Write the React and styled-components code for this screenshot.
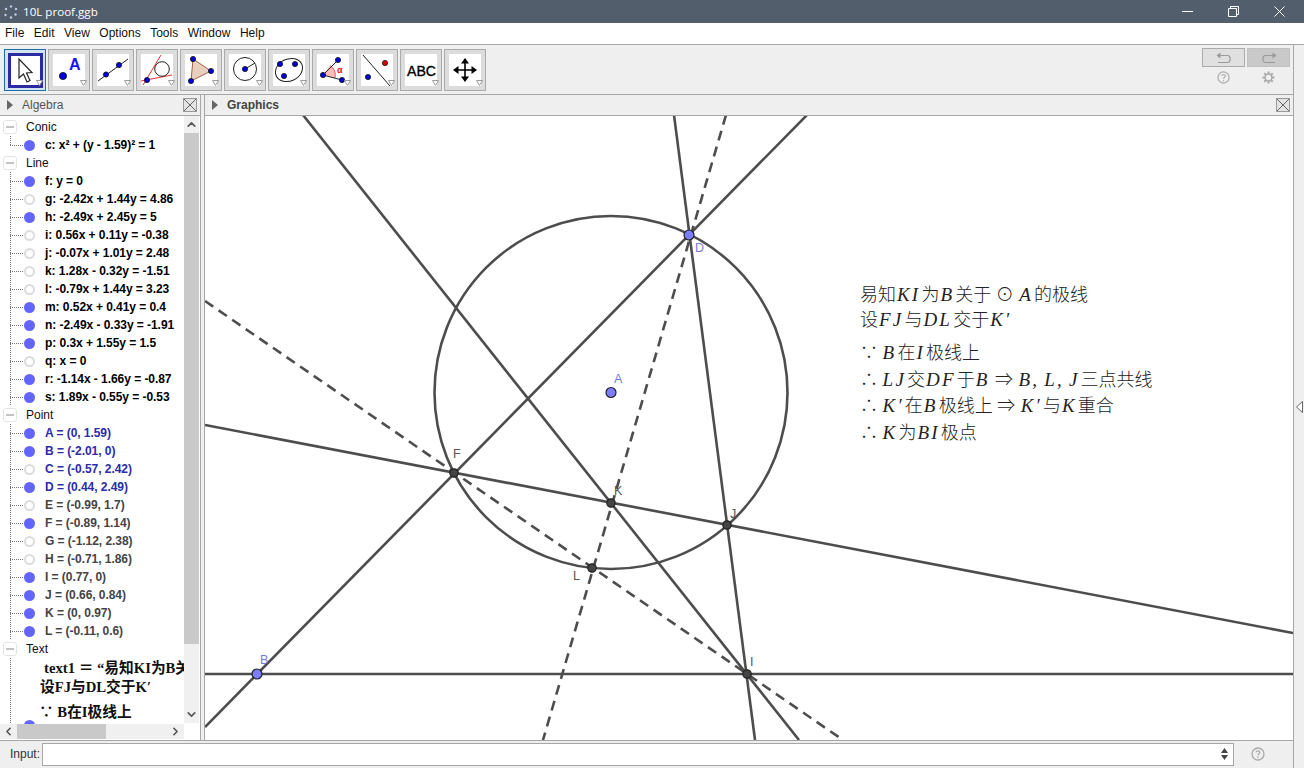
import React from 'react';
import styled, { createGlobalStyle } from 'styled-components';
import { ChevronUp, ChevronDown, ChevronLeft, ChevronRight } from 'lucide-react';

const GlobalStyle = createGlobalStyle`
  html, body {
    margin: 0;
    padding: 0;
    background: #fff;
    overflow: hidden;
  }
  * {
    box-sizing: border-box;
  }
`;

const Window = styled.div`
  width: 1304px;
  height: 768px;
  display: flex;
  flex-direction: column;
  overflow: hidden;
  font-family: 'Liberation Sans', Arial, sans-serif;
  font-size: 12px;
  color: #000;
`;

/* title bar */
const TitleBar = styled.div`
  height: 23px;
  flex: none;
  background: #535e6c;
  color: #fff;
  display: flex;
  align-items: center;
  padding-left: 3px;
`;
const TitleText = styled.span`
  margin-left: 4px;
  font-family: 'Open Sans', sans-serif;
  font-size: 11.6px;
  flex: 1;
`;
const WinButton = styled.span`
  width: 46px;
  height: 23px;
  display: flex;
  align-items: center;
  justify-content: center;
`;
const WinButtons = styled.div`
  display: flex;
  margin-right: 2px;
`;

/* menu */
const MenuBar = styled.div`
  height: 22px;
  flex: none;
  display: flex;
  align-items: center;
  gap: 9.5px;
  padding: 0 0 1px 5px;
  background: #fff;
  border-bottom: 1px solid #a6a6a6;
  font-size: 12px;
`;
const MenuItem = styled.span`
  color: #111;
`;

const Workspace = styled.div`
  flex: 1;
  min-height: 0;
  display: flex;
`;
const Main = styled.div`
  width: 1294px;
  flex: none;
  display: flex;
  flex-direction: column;
  border-right: 1px solid #a6a6a6;
`;
const SideStrip = styled.div`
  flex: 1;
  background: #efefef;
  display: flex;
  align-items: center;
  justify-content: center;
`;

/* toolbar */
const Toolbar = styled.div`
  height: 50px;
  flex: none;
  background: #efefef;
  border-bottom: 1px solid #a6a6a6;
  display: flex;
  align-items: flex-start;
  justify-content: space-between;
  padding: 4px 3px 0 4px;
`;
const ToolGroup = styled.div`
  display: flex;
  gap: 2px;
`;
const ToolButton = styled.div`
  position: relative;
  width: 42px;
  height: 42px;
  display: flex;
  align-items: center;
  justify-content: center;
  background: ${p => (p.$active ? '#d4e4ee' : '#dcdcdc')};
  border: 1px solid ${p => (p.$active ? '#1c6ea4' : '#ababab')};
`;
const ToolFace = styled.div`
  width: 32px;
  height: 32px;
  background: #fff;
  display: flex;
  svg {
    display: block;
  }
`;
const ActiveFace = styled.div`
  width: 35px;
  height: 35px;
  background: #fff;
  border: 3px solid #2a2aa3;
  display: flex;
  align-items: center;
  justify-content: center;
`;
const DropMark = styled.svg`
  position: absolute;
  right: 2px;
  bottom: 4px;
  width: 7px;
  height: 6px;
`;
const HistoryGroup = styled.div`
  display: grid;
  grid-template-columns: 43px 43px;
  column-gap: 2px;
  row-gap: 4px;
  justify-items: center;
  align-items: center;
  margin-top: -1px;
`;
const HistoryButton = styled.div`
  width: 43px;
  height: 19px;
  display: flex;
  align-items: center;
  justify-content: center;
  background: ${p => (p.$dim ? '#c9c9c9' : '#e0e0e0')};
  border: 1px solid ${p => (p.$dim ? '#c0c0c0' : '#ababab')};
`;

/* dock panels */
const Panels = styled.div`
  flex: 1;
  min-height: 0;
  display: flex;
  background: #efefef;
`;
const AlgebraPanel = styled.div`
  width: 201px;
  flex: none;
  display: flex;
  flex-direction: column;
  border-right: 1px solid #a6a6a6;
`;
const GraphicsPanel = styled.div`
  flex: 1;
  margin-left: 3px;
  display: flex;
  flex-direction: column;
  min-width: 0;
  border-left: 1px solid #a6a6a6;
`;
const PanelHeader = styled.div`
  height: 21px;
  flex: none;
  display: flex;
  align-items: center;
  background: #efefef;
  border-bottom: 1px solid #a6a6a6;
  padding: 0 2px 0 ${p => p.$inset}px;
`;
const PanelTitle = styled.span`
  flex: 1;
  margin-left: ${p => p.$gap}px;
  color: ${p => (p.$strong ? '#444' : '#555')};
  font-weight: ${p => (p.$strong ? 700 : 400)};
  font-size: 12px;
`;
const CloseBox = styled.span`
  width: 14px;
  height: 14px;
  margin-right: ${p => p.$right || 0}px;
  display: flex;
  background: #e4e4e4;
  border: 1px solid #9a9a9a;
  svg {
    display: block;
  }
`;

/* algebra tree */
const TreeArea = styled.div`
  flex: 1;
  min-height: 0;
  display: grid;
  grid-template-columns: 184px 16px;
  grid-template-rows: 1fr 16px;
  background: #fff;
`;
const TreeList = styled.div`
  overflow: hidden;
  padding-top: 2px;
`;
const GroupRow = styled.div`
  height: 18px;
  display: flex;
  align-items: center;
  padding-left: 3px;
  font-size: 12px;
  color: #111;
`;
const Toggle = styled.span`
  width: 14px;
  height: 14px;
  margin-right: 9px;
  border: 1px solid #e4e4e4;
  border-radius: 3px;
  display: flex;
  align-items: center;
  justify-content: center;
  &::after {
    content: '';
    width: 8px;
    height: 2px;
    background: #c4c4c4;
  }
`;
const ItemRow = styled.div`
  height: 18px;
  display: flex;
  align-items: center;
  padding-left: 10px;
  font-size: 12px;
  font-weight: 700;
  letter-spacing: -0.05px;
  white-space: nowrap;
  color: ${p => p.$color};
`;
const Connector = styled.span`
  width: 14px;
  height: 18px;
  flex: none;
  background-image:
    repeating-linear-gradient(to bottom, #777 0 1px, transparent 1px 2px),
    repeating-linear-gradient(to right, #777 0 1px, transparent 1px 2px);
  background-repeat: no-repeat;
  background-size: 1px ${p => (p.$last ? 9 : 18)}px, 14px 1px;
  background-position: 0 0, 0 9px;
`;
const Bullet = styled.span`
  width: 11px;
  height: 11px;
  flex: none;
  margin-right: 10px;
  border-radius: 50%;
  background: ${p => (p.$on ? '#6464ff' : '#fff')};
  border: ${p => (p.$on ? 'none' : '2px solid #dcdcdc')};
`;
const TextBlock = styled.div`
  position: relative;
  height: 70px;
  padding-left: 10px;
  display: flex;
  background-image: repeating-linear-gradient(to bottom, #777 0 1px, transparent 1px 2px);
  background-repeat: no-repeat;
  background-size: 1px 100%;
  background-position: 10px 0;
`;
const TextLines = styled.div`
  margin-left: 33px;
  font-family: 'Liberation Serif', 'Noto Sans CJK SC', serif;
  font-weight: 700;
  font-size: 14.7px;
  white-space: nowrap;
  color: #111;
`;
const TextLine = styled.div`
  height: ${p => p.$h}px;
  line-height: ${p => p.$h}px;
  margin-left: ${p => p.$indent || 0}px;
`;
const MiniBullet = styled(Bullet)`
  position: absolute;
  left: 24px;
  bottom: -3px;
`;
const VScroll = styled.div`
  background: #f0f0f0;
  display: flex;
  flex-direction: column;
  align-items: stretch;
  margin-right: 1px;
  margin-bottom: 1px;
`;
const VThumb = styled.div`
  height: 511px;
  flex: none;
  background: #c9c9c9;
`;
const ScrollArrow = styled.div`
  display: flex;
  align-items: center;
  justify-content: center;
  height: ${p => p.$size || 16}px;
  flex: ${p => (p.$grow ? 1 : 'none')};
  width: ${p => p.$width || 'auto'};
`;
const HScroll = styled.div`
  background: #f0f0f0;
  display: flex;
  align-items: stretch;
  margin-bottom: 1px;
`;
const HThumb = styled.div`
  width: 89px;
  flex: none;
  background: #c9c9c9;
`;
const Corner = styled.div`
  background: #fff;
`;

/* graphics view */
const Canvas = styled.div`
  position: relative;
  flex: 1;
  min-height: 0;
  background: #fff;
  overflow: hidden;
  svg {
    display: block;
  }
`;
const Proof = styled.div`
  position: absolute;
  left: 655px;
  top: 166px;
  font-family: 'Liberation Serif', 'Noto Sans CJK SC', serif;
  font-size: 18px;
  font-weight: 300;
  color: #222;
  white-space: nowrap;
`;
const ProofLine = styled.div`
  height: ${p => p.$h || 26.5}px;
  line-height: ${p => p.$h || 26.5}px;
  margin-bottom: ${p => p.$after || 0}px;
  i {
    font-size: 19px;
    font-weight: 400;
    letter-spacing: 2.2px;
    word-spacing: -2px;
    margin: 0 1px;
  }
`;

/* input bar */
const InputBar = styled.div`
  height: 28px;
  flex: none;
  display: flex;
  align-items: center;
  background: #efefef;
  border-top: 1px solid #a6a6a6;
  padding: 0 0 1px 10px;
`;
const InputLabel = styled.span`
  width: 32px;
  font-size: 12px;
  color: #333;
`;
const InputField = styled.div`
  width: 1192px;
  height: 23px;
  background: #fff;
  border: 1px solid #a6a6a6;
  display: flex;
  align-items: center;
  justify-content: flex-end;
  padding-right: 5px;
`;
const HelpSlot = styled.span`
  display: flex;
  margin-left: 17px;
`;

const trees = [
  {
    name: 'Conic',
    items: [{ t: 'c: x² + (y - 1.59)² = 1', on: true }],
  },
  {
    name: 'Line',
    items: [
      { t: 'f: y = 0', on: true },
      { t: 'g: -2.42x + 1.44y = 4.86' },
      { t: 'h: -2.49x + 2.45y = 5', on: true },
      { t: 'i: 0.56x + 0.11y = -0.38' },
      { t: 'j: -0.07x + 1.01y = 2.48' },
      { t: 'k: 1.28x - 0.32y = -1.51' },
      { t: 'l: -0.79x + 1.44y = 3.23' },
      { t: 'm: 0.52x + 0.41y = 0.4', on: true },
      { t: 'n: -2.49x - 0.33y = -1.91', on: true },
      { t: 'p: 0.3x + 1.55y = 1.5', on: true },
      { t: 'q: x = 0' },
      { t: 'r: -1.14x - 1.66y = -0.87', on: true },
      { t: 's: 1.89x - 0.55y = -0.53', on: true },
    ],
  },
  {
    name: 'Point',
    color: '#444',
    items: [
      { t: 'A = (0, 1.59)', on: true, color: '#2c2ca8' },
      { t: 'B = (-2.01, 0)', on: true, color: '#2c2ca8' },
      { t: 'C = (-0.57, 2.42)', color: '#2c2ca8' },
      { t: 'D = (0.44, 2.49)', on: true, color: '#2c2ca8' },
      { t: 'E = (-0.99, 1.7)' },
      { t: 'F = (-0.89, 1.14)', on: true },
      { t: 'G = (-1.12, 2.38)' },
      { t: 'H = (-0.71, 1.86)' },
      { t: 'I = (0.77, 0)', on: true },
      { t: 'J = (0.66, 0.84)', on: true },
      { t: 'K = (0, 0.97)', on: true },
      { t: 'L = (-0.11, 0.6)', on: true },
    ],
  },
];

const Dot = ({ x, y, r = 2.6, fill = '#0000e0' }) => (
  <circle cx={x} cy={y} r={r} fill={fill} stroke="#111" strokeWidth="0.8" />
);

const Icon = ({ children }) => (
  <svg width="32" height="32" viewBox="0 0 32 32">
    {children}
  </svg>
);

const toolIcons = [
  <Icon key="point">
    <Dot x={10} y={22} r={3.6} />
    <text x="16" y="16" fontFamily="Liberation Sans" fontWeight="700" fontSize="16" fill="#1414ff">A</text>
  </Icon>,
  <Icon key="line">
    <line x1="1" y1="27" x2="31" y2="5" stroke="#222" strokeWidth="1" />
    <Dot x={9} y={20.5} />
    <Dot x={22} y={11} />
  </Icon>,
  <Icon key="tangent">
    <line x1="2" y1="31" x2="20" y2="1" stroke="#f03030" strokeWidth="1" />
    <line x1="0" y1="27" x2="31" y2="21" stroke="#f03030" strokeWidth="1" />
    <circle cx="21" cy="15" r="7.3" fill="none" stroke="#222" strokeWidth="1" />
    <Dot x={6} y={26} />
  </Icon>,
  <Icon key="polygon">
    <polygon points="8,5 26,17 6,27" fill="#e8cfc0" stroke="#a8603a" strokeWidth="1" />
    <Dot x={8} y={5} />
    <Dot x={26} y={17} />
    <Dot x={6} y={27} />
  </Icon>,
  <Icon key="circle">
    <circle cx="16" cy="15" r="11.5" fill="none" stroke="#222" strokeWidth="1" />
    <line x1="16" y1="15" x2="26" y2="9" stroke="#222" strokeWidth="1" />
    <Dot x={16} y={15} />
  </Icon>,
  <Icon key="conic">
    <ellipse cx="16" cy="16" rx="14" ry="11" transform="rotate(-25 16 16)" fill="none" stroke="#222" strokeWidth="1" />
    <Dot x={7} y={10} />
    <Dot x={22} y={10} />
    <Dot x={11} y={22} />
  </Icon>,
  <Icon key="angle">
    <path d="M6 21 L13 11.5 A12 12 0 0 1 18 24 Z" fill="#ffbcbc" />
    <path d="M13 11.5 A12 12 0 0 1 18 24" fill="none" stroke="#f03030" strokeWidth="0.8" />
    <polyline points="21,6 6,21 25,26" fill="none" stroke="#222" strokeWidth="1" />
    <text x="20" y="19" fontFamily="Liberation Sans" fontWeight="700" fontSize="9" fill="#e81818">α</text>
    <Dot x={21} y={6} />
    <Dot x={6} y={21} />
    <Dot x={25} y={26} />
  </Icon>,
  <Icon key="reflect">
    <line x1="2" y1="1" x2="29" y2="32" stroke="#222" strokeWidth="1" />
    <Dot x={7} y={23} />
    <Dot x={24} y={9} fill="#e00000" />
  </Icon>,
  <Icon key="text">
    <text x="2" y="22" fontFamily="Liberation Sans" fontSize="14.5" stroke="#000" strokeWidth="0.35" fill="#000" textLength="29" lengthAdjust="spacingAndGlyphs">ABC</text>
  </Icon>,
  <Icon key="move">
    <path d="M16 5 V27 M5 16 H27" stroke="#000" strokeWidth="1.6" />
    <polygon points="16,4 12,9.5 20,9.5" fill="#000" />
    <polygon points="16,28 12,22.5 20,22.5" fill="#000" />
    <polygon points="4,16 9.5,12 9.5,20" fill="#000" />
    <polygon points="28,16 22.5,12 22.5,20" fill="#000" />
  </Icon>,
];

const Drop = () => (
  <DropMark viewBox="0 0 7 6">
    <polygon points="0.5,0.5 6.5,0.5 3.5,5.5" fill="#fff" stroke="#9a9a9a" strokeWidth="1" />
  </DropMark>
);

const CloseGlyph = () => (
  <svg width="12" height="12" viewBox="0 0 12 12">
    <path d="M0 0 L12 12 M12 0 L0 12" stroke="#666" strokeWidth="1" />
  </svg>
);

const Caret = () => (
  <svg width="6" height="10" viewBox="0 0 6 10">
    <polygon points="0,0 6,5 0,10" fill="#666" />
  </svg>
);

const HelpGlyph = ({ size = 13 }) => (
  <svg width={size} height={size} viewBox="0 0 14 14">
    <circle cx="7" cy="7" r="6" fill="none" stroke="#aaa" strokeWidth="1.3" />
    <path d="M5.2 5.4 C5.2 3.2 8.9 3.3 8.9 5.4 C8.9 6.7 7 6.7 7 8.4" fill="none" stroke="#aaa" strokeWidth="1.2" />
    <rect x="6.4" y="9.6" width="1.3" height="1.4" fill="#aaa" />
  </svg>
);

const GearGlyph = () => (
  <svg width="13" height="13" viewBox="0 0 13 13">
    <path d="M6.5 0.5 V12.5 M0.5 6.5 H12.5 M2.3 2.3 L10.7 10.7 M10.7 2.3 L2.3 10.7" stroke="#aaa" strokeWidth="2" />
    <circle cx="6.5" cy="6.5" r="3.4" fill="#efefef" stroke="#aaa" strokeWidth="1.5" />
  </svg>
);

const UndoGlyph = ({ flip }) => (
  <svg width="16" height="12" viewBox="0 0 16 12" style={flip ? { transform: 'scaleX(-1)' } : undefined}>
    <path d="M3 3.5 H11.5 C15 3.5 15 10.5 11.5 10.5 H2" fill="none" stroke="#999" strokeWidth="1.2" />
    <polygon points="0.5,3.5 4.5,0.5 4.5,6.5" fill="#999" />
  </svg>
);

const LINE = '#4d4d4d';

const Construction = () => (
  <svg width="1088" height="624" viewBox="205 116 1088 624">
    <g fill="none" stroke={LINE} strokeWidth="2.6">
      <circle cx="611" cy="392.5" r="176.5" />
      <line x1="205" y1="727" x2="807" y2="115" />
      <line x1="205" y1="674" x2="1293" y2="674" />
      <line x1="674" y1="115" x2="755" y2="740" />
      <line x1="303" y1="115" x2="799" y2="740" />
      <line x1="205" y1="425" x2="1293" y2="633" />
      <g strokeDasharray="10 6.5">
        <line x1="205" y1="301" x2="843" y2="740" />
        <line x1="726" y1="115" x2="543" y2="740" />
      </g>
    </g>
    <g fontFamily="Liberation Sans" fontSize="12.5">
      <g fill="#7a7ad8">
        <text x="614" y="383">A</text>
        <text x="260" y="664">B</text>
        <text x="695" y="252">D</text>
      </g>
      <g fill="#555">
        <text x="453" y="458">F</text>
        <text x="614" y="495">K</text>
        <text x="730" y="518">J</text>
        <text x="573" y="580">L</text>
        <text x="750" y="666">I</text>
      </g>
    </g>
    <g stroke="#222" strokeWidth="1.2">
      <g fill="#7d7dff">
        <circle cx="611" cy="392.5" r="5" />
        <circle cx="257" cy="674" r="5" />
        <circle cx="689" cy="235" r="5" />
      </g>
      <g fill="#444">
        <circle cx="454" cy="473" r="4.2" />
        <circle cx="611" cy="503" r="4.2" />
        <circle cx="727" cy="525" r="4.2" />
        <circle cx="592" cy="568" r="4.2" />
        <circle cx="747" cy="674" r="4.2" />
      </g>
    </g>
  </svg>
);

const App = () => (
  <Window>
    <GlobalStyle />
    <TitleBar>
      <svg width="16" height="16" viewBox="0 0 16 16">
        <g fill="#c6c8e6">
          <circle cx="3" cy="5" r="1.2" />
          <circle cx="8" cy="2.5" r="1.2" />
          <circle cx="13" cy="5" r="1.2" />
          <circle cx="2.5" cy="11" r="1.2" />
          <circle cx="8" cy="13.5" r="1.2" />
          <circle cx="12.5" cy="10.5" r="1.2" />
        </g>
      </svg>
      <TitleText>10L proof.ggb</TitleText>
      <WinButtons>
        <WinButton>
          <svg width="11" height="11" viewBox="0 0 11 11">
            <line x1="0" y1="5.5" x2="11" y2="5.5" stroke="#fff" />
          </svg>
        </WinButton>
        <WinButton>
          <svg width="11" height="11" viewBox="0 0 11 11">
            <path d="M2.5 2.5 V0.5 H10.5 V8.5 H8.5 M0.5 2.5 H8.5 V10.5 H0.5 Z" fill="none" stroke="#fff" />
          </svg>
        </WinButton>
        <WinButton>
          <svg width="11" height="11" viewBox="0 0 11 11">
            <path d="M0.5 0.5 L10.5 10.5 M10.5 0.5 L0.5 10.5" stroke="#fff" />
          </svg>
        </WinButton>
      </WinButtons>
    </TitleBar>

    <MenuBar>
      {['File', 'Edit', 'View', 'Options', 'Tools', 'Window', 'Help'].map(m => (
        <MenuItem key={m}>{m}</MenuItem>
      ))}
    </MenuBar>

    <Workspace>
      <Main>
        <Toolbar>
          <ToolGroup>
            <ToolButton $active>
              <ActiveFace>
                <svg width="22" height="28" viewBox="0 0 22 28">
                  <path d="M5 3 V22 L9.5 18 L13 26 L16 24.5 L12.5 17 L18 16.5 Z" fill="#fff" stroke="#222" strokeWidth="1.2" />
                </svg>
              </ActiveFace>
              <Drop />
            </ToolButton>
            {toolIcons.map(icon => (
              <ToolButton key={icon.key}>
                <ToolFace>{icon}</ToolFace>
                <Drop />
              </ToolButton>
            ))}
          </ToolGroup>
          <HistoryGroup>
            <HistoryButton><UndoGlyph /></HistoryButton>
            <HistoryButton $dim><UndoGlyph flip /></HistoryButton>
            <HelpGlyph />
            <GearGlyph />
          </HistoryGroup>
        </Toolbar>

        <Panels>
          <AlgebraPanel>
            <PanelHeader $inset={7}>
              <Caret />
              <PanelTitle $gap={9}>Algebra</PanelTitle>
              <CloseBox $right={1}><CloseGlyph /></CloseBox>
            </PanelHeader>
            <TreeArea>
              <TreeList>
                {trees.map(group => (
                  <div key={group.name}>
                    <GroupRow>
                      <Toggle />
                      {group.name}
                    </GroupRow>
                    {group.items.map((item, i) => (
                      <ItemRow key={item.t} $color={item.color || group.color || '#000'}>
                        <Connector $last={group.items.length === 1 && i === 0} />
                        <Bullet $on={item.on} />
                        {item.t}
                      </ItemRow>
                    ))}
                  </div>
                ))}
                <GroupRow>
                  <Toggle />
                  Text
                </GroupRow>
                <TextBlock>
                  <TextLines>
                    <TextLine $h={20} $indent={1}>text1 ＝ “易知KI为B关于</TextLine>
                    <TextLine $h={19} $indent={-3}>设FJ与DL交于K′</TextLine>
                    <TextLine $h={31} $indent={-4}>∵ B在I极线上</TextLine>
                  </TextLines>
                  <MiniBullet $on />
                </TextBlock>
              </TreeList>
              <VScroll>
                <ScrollArrow $size={17}><ChevronUp size={13} strokeWidth={3} color="#555" /></ScrollArrow>
                <VThumb />
                <ScrollArrow $grow><ChevronDown size={13} strokeWidth={3} color="#555" style={{ marginTop: 'auto', marginBottom: '2px' }} /></ScrollArrow>
              </VScroll>
              <HScroll>
                <ScrollArrow $width="17px" $size={15}><ChevronLeft size={13} strokeWidth={3} color="#555" /></ScrollArrow>
                <HThumb />
                <ScrollArrow $grow $size={15}><ChevronRight size={13} strokeWidth={3} color="#555" style={{ marginLeft: 'auto', marginRight: '2px' }} /></ScrollArrow>
              </HScroll>
              <Corner />
            </TreeArea>
          </AlgebraPanel>

          <GraphicsPanel>
            <PanelHeader $inset={7}>
              <Caret />
              <PanelTitle $gap={9} $strong>Graphics</PanelTitle>
              <CloseBox $right={1}><CloseGlyph /></CloseBox>
            </PanelHeader>
            <Canvas>
              <Construction />
              <Proof>
                <ProofLine $h={25}>易知<i>KI</i>为<i>B</i>关于 ⊙ <i>A</i>的极线</ProofLine>
                <ProofLine $h={25} $after={8}>设<i>FJ</i>与<i>DL</i>交于<i>K′</i></ProofLine>
                <ProofLine>∵{'\u2009'}<i>B</i>在<i>I</i>极线上</ProofLine>
                <ProofLine>∴{'\u2009'}<i>LJ</i>交<i>DF</i>于<i>B</i> ⇒ <i>B, L, J</i>三点共线</ProofLine>
                <ProofLine>∴{'\u2009'}<i>K′</i>在<i>B</i>极线上 ⇒ <i>K′</i>与<i>K</i>重合</ProofLine>
                <ProofLine>∴{'\u2009'}<i>K</i>为<i>BI</i>极点</ProofLine>
              </Proof>
            </Canvas>
          </GraphicsPanel>
        </Panels>

        <InputBar>
          <InputLabel>Input:</InputLabel>
          <InputField>
            <svg width="7" height="12" viewBox="0 0 7 12">
              <polygon points="3.5,0 7,5 0,5" fill="#444" />
              <polygon points="3.5,12 7,7 0,7" fill="#444" />
            </svg>
          </InputField>
          <HelpSlot><HelpGlyph size={14} /></HelpSlot>
        </InputBar>
      </Main>
      <SideStrip>
        <svg width="7" height="12" viewBox="0 0 7 12">
          <polygon points="6.5,0.5 6.5,11.5 0.5,6" fill="#fff" stroke="#666" />
        </svg>
      </SideStrip>
    </Workspace>
  </Window>
);

export default App;
